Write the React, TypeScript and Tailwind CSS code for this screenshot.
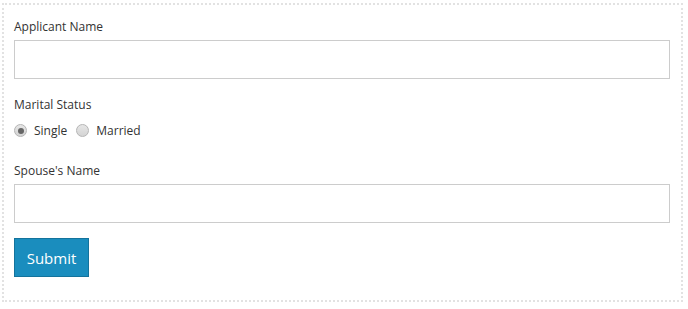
import { useState } from 'react'

type Status = 'single' | 'married'

export default function App() {
  const [status, setStatus] = useState<Status>('single')

  return (
    <div className="pt-[3px] pl-[2px] pr-[5px] pb-[5px] bg-white font-['Open_Sans',sans-serif] text-[#333]">
      <form
        className="border-2 border-dotted border-[#e2e2e2] pt-[13px] pl-[10px] pr-[11px] pb-[23px]"
        onSubmit={(e) => e.preventDefault()}
      >
        <Label>Applicant Name</Label>
        <TextBox />

        <div className="mt-[17px]">
          <Label>Marital Status</Label>
        </div>
        <div className="mt-[9px] flex items-center h-[17px] text-[12px] leading-[17px]">
          <Radio checked={status === 'single'} onClick={() => setStatus('single')} />
          <span className="ml-[7px] mr-[9px]">Single</span>
          <Radio checked={status === 'married'} onClick={() => setStatus('married')} />
          <span className="ml-[7px]">Married</span>
        </div>

        <div className="mt-[23px]">
          <Label>Spouse's Name</Label>
        </div>
        <TextBox />

        <button
          type="submit"
          className="mt-[15px] block h-[39px] w-[75px] bg-[#1a8dbe] border border-[#14739c] text-white text-[15px] leading-[20px]"
        >
          Submit
        </button>
      </form>
    </div>
  )
}

function Label({ children }: { children: React.ReactNode }) {
  return <div className="text-[12px] leading-[17px] text-[#333]">{children}</div>
}

function TextBox() {
  return (
    <input
      type="text"
      className="mt-[5px] block h-[39px] w-full border border-[#cccccc] bg-white px-2 text-[13px] outline-none"
    />
  )
}

function Radio({ checked, onClick }: { checked: boolean; onClick: () => void }) {
  return (
    <span
      onClick={onClick}
      className="flex h-[13px] w-[13px] items-center justify-center rounded-full border border-[#b5b5b5] bg-gradient-to-b from-[#e6e6e6] to-[#d4d4d4]"
    >
      {checked && <span className="h-[6px] w-[6px] rounded-full bg-[#666]" />}
    </span>
  )
}
